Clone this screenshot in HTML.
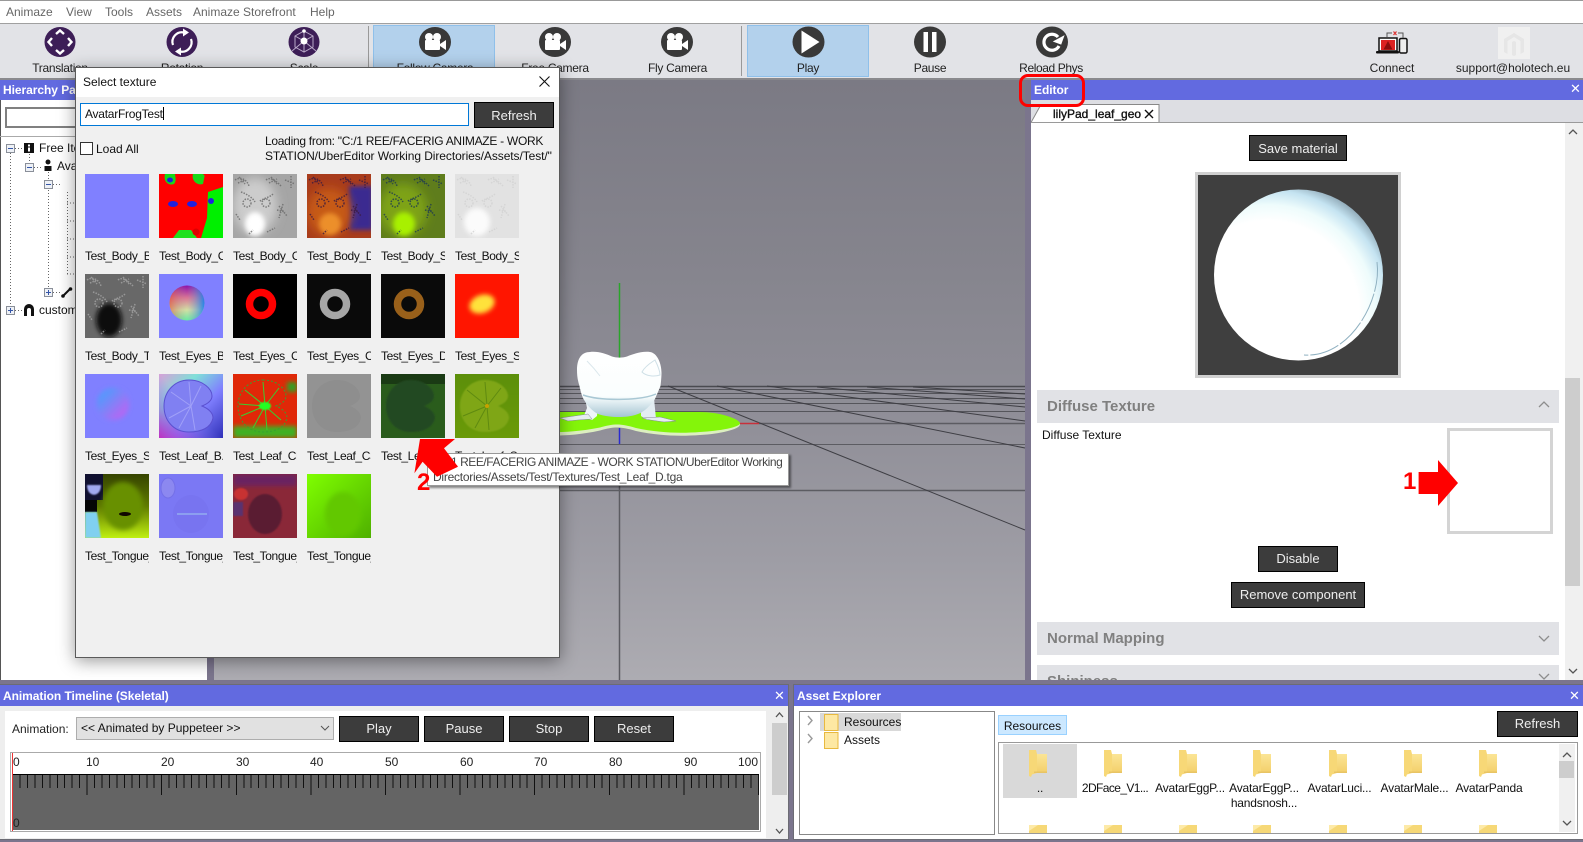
<!DOCTYPE html>
<html><head><meta charset="utf-8"><title>Animaze Editor</title>
<style>
html,body{margin:0;padding:0}
body{position:relative;width:1583px;height:842px;overflow:hidden;background:#7b758d;font:12px/14px "Liberation Sans",sans-serif;color:#000}
div,svg{position:absolute}
.t{position:absolute;white-space:nowrap;font:12px/14px "Liberation Sans",sans-serif}
.m{color:#666;top:5px}
.c{transform:translateX(-50%);top:61px;color:#222;letter-spacing:-.3px}
.bar{background:#626ae0;height:20px}
.bt{position:absolute;color:#fff;font:bold 12px/14px "Liberation Sans",sans-serif;white-space:nowrap;letter-spacing:-.05px}
.btn{position:absolute;box-sizing:border-box;background:#3c3c3c;border:1px solid #000;color:#eee;font:13px/24px "Liberation Sans",sans-serif;text-align:center;white-space:nowrap}
.hd{position:absolute;left:1037px;width:522px;background:#e1e2e6;color:#808080;font:bold 15px/34px "Liberation Sans",sans-serif;text-indent:10px}
.lb{position:absolute;width:64px;overflow:hidden;white-space:nowrap;font:12px/14px "Liberation Sans",sans-serif;color:#111;letter-spacing:-.4px}
.f{position:absolute;white-space:nowrap;text-align:center;transform:translateX(-50%);font:12px/15px "Liberation Sans",sans-serif;color:#111;letter-spacing:-.2px}
.tk{position:absolute;top:755px;font:12px/14px "Liberation Sans",sans-serif;color:#222}
</style></head><body>

<!-- menu -->
<div style="left:0;top:0;width:1583px;height:23px;background:#fff;border-top:1px solid #999;box-sizing:border-box"></div>
<div style="left:0;top:23px;width:1583px;height:1px;background:#a0a0a0"></div>
<span class="t m" style="left:6px">Animaze</span>
<span class="t m" style="left:66px">View</span>
<span class="t m" style="left:105px">Tools</span>
<span class="t m" style="left:146px">Assets</span>
<span class="t m" style="left:193px">Animaze Storefront</span>
<span class="t m" style="left:310px">Help</span>

<!-- toolbar -->
<div style="left:0;top:24px;width:1583px;height:55px;background:#e2e3e7"></div>
<div style="left:0;top:78px;width:1583px;height:2px;background:#8a8a8e"></div>
<div style="left:373px;top:25px;width:122px;height:52px;background:#b3d1ec;border:1px solid #8fc0ea;box-sizing:border-box"></div>
<div style="left:747px;top:25px;width:122px;height:52px;background:#b3d1ec;border:1px solid #8fc0ea;box-sizing:border-box"></div>
<div style="left:368px;top:26px;width:1px;height:50px;background:#999"></div>
<div style="left:741px;top:26px;width:1px;height:50px;background:#999"></div>

<svg style="left:0;top:0" width="1583" height="80" viewBox="0 0 1583 80">
 <defs>
  <g id="cam"><ellipse rx="16" ry="15" fill="#393939"/><circle cx="-6" cy="-5" r="4" fill="#fff"/><circle cx="2" cy="-5" r="4" fill="#fff"/><rect x="-10" y="-2" width="15" height="10" rx="1" fill="#fff"/><path d="M5 2L11-2V8L5 4Z" fill="#fff"/></g>
 </defs>
 <g transform="translate(60,42)"><ellipse rx="15.500" ry="15" fill="#3d1e57"/>
  <path d="M-4-8L0-11.500 4-8M-4 8L0 11.500 4 8M-8-4L-11.500 0-8 4M8-4L11.500 0 8 4" fill="none" stroke="#fff" stroke-width="2.400"/></g>
 <g transform="translate(182,42)"><ellipse rx="15.500" ry="15" fill="#3d1e57"/>
  <path d="M-9 3A9.500 9.500 0 0 1 2-9.500" fill="none" stroke="#fff" stroke-width="2.200"/><path d="M1-13.500L7-9.500 1-5.500Z" fill="#fff"/>
  <path d="M9-3A9.500 9.500 0 0 1-2 9.500" fill="none" stroke="#fff" stroke-width="2.200"/><path d="M-1 13.500L-7 9.500-1 5.500Z" fill="#fff"/></g>
 <g transform="translate(304,42)"><ellipse rx="15.500" ry="15" fill="#3d1e57"/>
  <path d="M0-11L9-6V5L0 10-9 5V-6ZM0-11V10M-9-6L0-1 9-6M-12 9L0-1 12 9" fill="none" stroke="#b9a9c8" stroke-width="1"/><circle r="3.500" cy="-1" fill="#fff"/><circle cy="-11" r="1.800" fill="#fff"/></g>
 <use href="#cam" x="435" y="42"/><use href="#cam" x="555" y="42"/><use href="#cam" x="677" y="42"/>
 <g transform="translate(808.500,42)"><ellipse rx="16" ry="15.500" fill="#393939"/><path d="M-7-11.500L11 0-7 11.500Z" fill="#fff"/></g>
 <g transform="translate(930,42)"><ellipse rx="16" ry="15.500" fill="#393939"/><rect x="-6.500" y="-10" width="4.500" height="20" fill="#fff"/><rect x="2" y="-10" width="4.500" height="20" fill="#fff"/></g>
 <g transform="translate(1052,42)"><ellipse rx="16" ry="15.500" fill="#393939"/><path d="M7 4A8 8 0 1 1 6-5" fill="none" stroke="#fff" stroke-width="3.200"/><path d="M10-8V2H1Z" fill="#fff" transform="rotate(20 8 0)"/></g>
 <g>
  <rect x="1379" y="38" width="18" height="13" fill="#fff" stroke="#111" stroke-width="1.500"/><rect x="1381" y="40" width="14" height="10" fill="#d22"/>
  <path d="M1388 41L1392.500 49.500H1383.500Z" fill="#8c0d0d"/>
  <rect x="1376" y="51" width="23" height="2.500" rx="1" fill="#111"/>
  <rect x="1399.500" y="38.500" width="7.500" height="14.500" rx="1.500" fill="#eee" stroke="#111" stroke-width="1.500"/>
  <path d="M1387 37V33H1392M1398 33H1403V38" fill="none" stroke="#555"/><path d="M1393.500 31.500L1396.500 35M1396.500 31.500L1393.500 35" stroke="#d33" stroke-width="1.200"/>
 </g>
 <rect x="1498" y="27" width="32" height="32" fill="#f0f0f0"/>
 <path d="M1514 33L1524 39V52L1520.500 54V41L1514 37 1507.500 41V54L1504 52V39ZM1512 42L1514 41 1516 42V55L1514 56 1512 55Z" fill="#e6e6e6"/>
</svg>
<span class="t c" style="left:60px">Translation</span>
<span class="t c" style="left:182px">Rotation</span>
<span class="t c" style="left:304px">Scale</span>
<span class="t c" style="left:435px">Follow Camera</span>
<span class="t c" style="left:555px">Free Camera</span>
<span class="t c" style="left:677.500px">Fly Camera</span>
<span class="t c" style="left:808px">Play</span>
<span class="t c" style="left:930px">Pause</span>
<span class="t c" style="left:1051px;letter-spacing:-.4px">Reload Phys</span>
<span class="t c" style="left:1392px;letter-spacing:0">Connect</span>
<span class="t c" style="left:1513px;letter-spacing:0">support@holotech.eu</span>

<!-- hierarchy panel -->
<div style="left:0;top:80px;width:207px;height:600px;background:#fff;border-left:1px solid #555;box-sizing:border-box"></div>
<div class="bar" style="left:0;top:80px;width:207px"></div>
<span class="bt" style="left:3px;top:83px">Hierarchy Panel</span>
<div style="left:5px;top:107px;width:195px;height:21px;border:2px solid #808080;box-sizing:border-box"></div>
<div style="left:0;top:136px;width:207px;height:1px;background:#aaa"></div>
<svg style="left:0;top:137px" width="90" height="190" viewBox="0 137 90 190">
 <g fill="none" stroke="#666" stroke-dasharray="1 2">
  <path d="M10.500 153V305M15 148.500H24M29.500 154V162M34 167.500H43M48.500 172V180M53 184.500H61M48.500 190V287M67.500 192V274M67 203H75M67 221H75M67 239H75M67 257H75M67 274H75M53 292.500H61M15 310.500H24"/>
 </g>
 <g fill="#eef1f6" stroke="#8a8f99"><rect x="6.500" y="144.500" width="8" height="8"/><rect x="25.500" y="163.500" width="8" height="8"/><rect x="44.500" y="180.500" width="8" height="8"/><rect x="44.500" y="288.500" width="8" height="8"/><rect x="6.500" y="306.500" width="8" height="8"/></g>
 <path d="M8 148.500H13M27 167.500H32M46 184.500H51M46 292.500H51M48.500 290V295M8 310.500H13M10.500 308V313" stroke="#3556a8" fill="none"/>
 <rect x="24" y="143" width="10" height="10" fill="#111"/><rect x="28" y="144.500" width="2" height="2" fill="#fff"/><rect x="28" y="147.500" width="2" height="4" fill="#fff"/>
 <circle cx="48" cy="162" r="2.500" fill="#111"/><path d="M44.500 171V166H51.500V171Z" fill="#111"/>
 <path d="M63 296L70 289" stroke="#111" stroke-width="2"/><circle cx="70.500" cy="289" r="1.800" fill="#111"/><circle cx="63" cy="296" r="1.800" fill="#111"/>
 <path d="M24 316V309A5 5 0 0 1 34 309V316H31V310A2 2 0 0 0 27 310V316Z" fill="#111"/>
</svg>
<span class="t" style="left:39px;top:141px;color:#111">Free Items</span>
<span class="t" style="left:57px;top:159px;color:#111">Avatar</span>
<span class="t" style="left:39px;top:303px;color:#111">customs</span>

<!-- viewport -->
<div style="left:214px;top:80px;width:811px;height:600px;background:linear-gradient(180deg,#7b7a84 0,#85848d 30%,#8f8e97 55%,#9e9da5 80%,#adacb2 100%)"></div>
<svg style="left:0;top:0" width="1583" height="842" viewBox="0 0 1583 842">
 <defs>
  <linearGradient id="frog" x1="0" y1="0" x2="0" y2="1"><stop offset="0" stop-color="#fff"/><stop offset=".68" stop-color="#fafefe"/><stop offset="1" stop-color="#a5c5d3"/></linearGradient>
 </defs>
 <g stroke="#4a4a50" stroke-width="1" fill="none">
  <path d="M214 386.500H1025" stroke-width="1.500"/><path d="M214 389.500H1025M214 393.500H1025M214 398.500H1025M214 403.500H1025" stroke="#55555b"/>
  <path d="M214 411.500H1025" stroke="#55555b"/><path d="M759 423.500H1025" stroke="#5c5c62" stroke-width="1.500"/>
  <path d="M214 444.500H1025" stroke="#5c5c62"/><path d="M214 490.500H1025" stroke="#5c5c62" stroke-width="1.500"/>
  <path d="M668 386L1025 530M717 386L1025 448M767 386L1025 421M817 387L1025 407M867 387L1025 399M913 387L1025 394" stroke="#3e3e44"/>
  <path d="M619.500 486V680" stroke="#5c5c62" stroke-width="1.500"/>
 </g>
 <path d="M619.500 283V360" stroke="#2aa52a" stroke-width="1.500"/>
 <path d="M739 423.500H759" stroke="#c8303a" stroke-width="1.500"/>
 <path d="M619.500 428V444" stroke="#2a2ad0" stroke-width="1.500"/>
 <path d="M540 415H700C718 415 738 419 740 424 741 429 720 434 700 435 680 436.500 660 436 636 431 620 426.500 615 426.500 600 430.500 575 436 555 436 540 435Z" fill="#dcefc0"/>
 <path d="M540 412H700C718 412 738 418 740 423 741 427 720 431 700 432 680 433.500 660 433 636 428 620 423.500 615 423.500 600 427.500 575 432.500 555 432.500 540 432Z" fill="#84f50a"/>
 <path d="M585 398L598 400 597 416 592 420 583 418 587 408Z" fill="#eef5f8"/>
 <path d="M641 400L654 398 656 419 647 420 641 416Z" fill="#e3edf2"/>
 <path d="M560 418L588 414 592 419 578 420 568 421ZM642 418L660 417 676 421 664 422 650 420Z" fill="#e5eeef" stroke="#889" stroke-width=".5"/>
 <path d="M577 370C577 358 582 352 590 352 598 351 606 354 612 356.500 617 358 622 358 627 356.500 633 354 642 351 650 352 657 353 661.500 363 661.500 373 661.500 378 660.500 386 660.500 386 658 392 655 399 655 399 650 406 644 412 638 414 628 418 610 418 598 414 592 411 587 405 583.500 399 581 394 579.500 386 579.500 386 577.500 380 577 375 577 370Z" fill="url(#frog)"/>
 <path d="M583 395C600 401 640 401 656 394" fill="none" stroke="#a9c8d4" stroke-width="1.500"/>
 <path d="M642 372C645 366 652 362 655 360 658 366 660 372 660 375 654 377 646 376 642 372Z" fill="none" stroke="#cfe0e7"/>
 <path d="M587 361C592 366 597 372 600 376" fill="none" stroke="#dbe7ec"/>
</svg>

<!-- editor panel -->
<div class="bar" style="left:1031px;top:80px;width:552px"></div>
<span class="bt" style="left:1034px;top:83px">Editor</span>
<span class="t" style="left:1570px;top:82px;color:#fff;font-size:13px">✕</span>
<div style="left:1031px;top:100px;width:552px;height:22px;background:#dddee3"></div>
<svg style="left:1031px;top:104px" width="130" height="19" viewBox="0 0 130 19"><path d="M0 18.500L10 .5H128V18.500Z" fill="#fff" stroke="#888"/></svg>
<span class="t" style="left:1053px;top:107px;color:#111;-webkit-text-stroke:.35px #111">lilyPad_leaf_geo</span>
<svg style="left:1143px;top:108px" width="12" height="12"><path d="M2 2L10 10M10 2L2 10" stroke="#111" stroke-width="1.400"/></svg>
<div style="left:1031px;top:122px;width:552px;height:1px;background:#9a9a9a"></div>
<div style="left:1031px;top:123px;width:534px;height:557px;background:#fff"></div>
<div style="left:1565px;top:123px;width:18px;height:557px;background:#f0f0f0"></div>
<div style="left:1565px;top:378px;width:15px;height:208px;background:#cdcdcd"></div>
<div class="btn" style="left:1249px;top:135px;width:98px;height:26px;line-height:25px">Save material</div>
<div style="left:1195px;top:172px;width:206px;height:206px;background:#3f3f3f;border:3px solid #d0d0d0;box-sizing:border-box"></div>
<svg style="left:1195px;top:172px" width="206" height="206" viewBox="1195 172 206 206">
 <defs><radialGradient id="sph" gradientUnits="userSpaceOnUse" cx="1268" cy="312" r="134"><stop offset=".68" stop-color="#fff"/><stop offset=".8" stop-color="#eefcfc"/><stop offset=".91" stop-color="#c4e3f1"/><stop offset="1" stop-color="#8fa8b6"/></radialGradient></defs>
 <ellipse cx="1298.500" cy="275" rx="84.500" ry="85.500" fill="url(#sph)"/>
 <path d="M1377 262C1382 300 1350 358 1304 355" fill="none" stroke="#8fb0c0" stroke-dasharray="30 2"/>
</svg>
<div class="hd" style="top:390px;height:33px">Diffuse Texture</div>
<span class="t" style="left:1042px;top:428px;color:#111">Diffuse Texture</span>
<div style="left:1447px;top:428px;width:106px;height:106px;box-sizing:border-box;border:3px solid #d4d4d4;background:#fff"></div>
<svg style="left:1400px;top:455px" width="62" height="56" viewBox="1400 455 62 56"><path d="M1418.600 472H1438V460L1458 483 1438 506V494H1418.600Z" fill="#f00"/></svg>
<span style="position:absolute;left:1403px;top:468px;font:bold 24px/28px 'Liberation Sans',sans-serif;color:#f00">1</span>
<div class="btn" style="left:1258px;top:546px;width:80px;height:26px">Disable</div>
<div class="btn" style="left:1231px;top:582px;width:134px;height:26px">Remove component</div>
<div class="hd" style="top:622px;height:33px">Normal Mapping</div>
<div style="left:1037px;top:665px;width:522px;height:15px;overflow:hidden;background:#e1e2e6;color:#808080;font:bold 15px/34px 'Liberation Sans',sans-serif;text-indent:10px">Shininess</div>
<svg style="left:1530px;top:125px" width="53" height="560" viewBox="1530 125 53 560">
 <g fill="none" stroke="#555" stroke-width="1.300"><path d="M1569 134L1573 130 1577 134M1569 669L1573 673 1577 669"/></g>
 <g fill="none" stroke="#8d8d8d" stroke-width="1.300"><path d="M1539 407L1544 402 1549 407M1539 636L1544 641 1549 636M1539 674L1544 679 1549 674"/></g>
</svg>
<div style="left:1019px;top:74px;width:66px;height:33px;border:3px solid #f00;border-radius:9px;box-sizing:border-box"></div>

<!-- timeline panel -->
<div style="left:0;top:685px;width:788px;height:154px;background:#eeeeee;outline:1px solid #6c6c74"></div>
<div class="bar" style="left:0;top:685px;width:788px;height:21px"></div>
<span class="bt" style="left:3px;top:689px">Animation Timeline (Skeletal)</span>
<span class="t" style="left:774px;top:689px;color:#fff;font-size:13px">✕</span>
<div style="left:5px;top:711px;width:761px;height:127px;background:#fff"></div>
<div style="left:772px;top:723px;width:15px;height:72px;background:#cdcdcd"></div>
<span class="t" style="left:12px;top:722px;color:#222">Animation:</span>
<div style="left:76px;top:717px;width:258px;height:23px;box-sizing:border-box;background:#e1e1e1;border:1px solid #adadad;font:12px/21px 'Liberation Sans',sans-serif;padding-left:4px;color:#111">&lt;&lt; Animated by Puppeteer &gt;&gt;</div>
<div class="btn" style="left:339px;top:716px;width:80px;height:26px">Play</div>
<div class="btn" style="left:424px;top:716px;width:80px;height:26px">Pause</div>
<div class="btn" style="left:509px;top:716px;width:80px;height:26px">Stop</div>
<div class="btn" style="left:594px;top:716px;width:80px;height:26px">Reset</div>
<div style="left:10px;top:752px;width:751px;height:80px;box-sizing:border-box;border:1px solid #aaa;background:#fff"></div>
<div style="left:12px;top:774px;width:747px;height:56px;background:#646464;border-top:1px solid #000;box-sizing:border-box"></div>
<div style="left:12px;top:775px;width:747px;height:13px;background:repeating-linear-gradient(90deg,#111 0,#111 1px,transparent 1px,transparent 7.460px)"></div>
<div style="left:12px;top:775px;width:747px;height:20px;background:repeating-linear-gradient(90deg,#111 0,#111 1px,transparent 1px,transparent 74.600px)"></div>
<div style="left:12px;top:753px;width:1px;height:78px;background:#e33"></div>
<span class="tk" style="left:13px">0</span><span class="tk" style="left:86px">10</span><span class="tk" style="left:161px">20</span><span class="tk" style="left:236px">30</span><span class="tk" style="left:310px">40</span><span class="tk" style="left:385px">50</span><span class="tk" style="left:460px">60</span><span class="tk" style="left:534px">70</span><span class="tk" style="left:609px">80</span><span class="tk" style="left:684px">90</span><span class="tk" style="left:738px">100</span>
<span class="tk" style="left:13px;top:816px">0</span>
<svg style="left:320px;top:710px" width="470" height="130" viewBox="320 710 470 130">
 <path d="M321 726L325 730 329 726" fill="none" stroke="#555"/>
 <path d="M776 717L779.500 713 783 717M776 829L779.500 833 783 829" fill="none" stroke="#555" stroke-width="1.300"/>
</svg>

<!-- asset explorer -->
<div style="left:794px;top:685px;width:789px;height:154px;background:#fff;outline:1px solid #6c6c74"></div>
<div class="bar" style="left:794px;top:685px;width:789px;height:21px"></div>
<span class="bt" style="left:797px;top:689px">Asset Explorer</span>
<span class="t" style="left:1569px;top:689px;color:#fff;font-size:13px">✕</span>
<div style="left:799px;top:711px;width:196px;height:124px;border:1px solid #888;box-sizing:border-box;background:#fff"></div>
<div style="left:820px;top:713px;width:81px;height:18px;background:#d9d9d9"></div>
<span class="t" style="left:844px;top:715px;color:#111">Resources</span>
<span class="t" style="left:844px;top:733px;color:#111">Assets</span>
<div style="left:998px;top:715px;width:69px;height:20px;box-sizing:border-box;background:#cce8ff;border:1px solid #99d1ff;font:12px/20px 'Liberation Sans',sans-serif;text-align:center;color:#111">Resources</div>
<div class="btn" style="left:1497px;top:711px;width:81px;height:26px">Refresh</div>
<div style="left:998px;top:742px;width:580px;height:92px;box-sizing:border-box;border:1px solid #999;background:#fff"></div>
<div style="left:1003px;top:744px;width:74px;height:54px;background:#d9d9d9"></div>
<div style="left:1559px;top:744px;width:16px;height:88px;background:#f0f0f0"></div>
<div style="left:1559px;top:761px;width:15px;height:17px;background:#cdcdcd"></div>
<svg style="left:790px;top:705px" width="793" height="130" viewBox="790 705 793 130">
 <defs>
  <linearGradient id="fy" x1="0" y1="0" x2="0" y2="1"><stop offset="0" stop-color="#fbe596"/><stop offset="1" stop-color="#f3cf6a"/></linearGradient>
  <g id="fo"><path d="M5 4H18V23H5Z" fill="url(#fy)"/><path d="M0 0H7L8 4V23L3 24.500 2 27 0 26Z" fill="#f7d877"/><path d="M5 21.500H18V23H5Z" fill="#e8c464"/></g>
  <g id="ft"><path d="M0 0H18V8H0Z" fill="#f6d877"/><path d="M0 0H9L0 6Z" fill="#fdeaa8"/></g>
 </defs>
 <path d="M808 716L812 720.500 808 725M808 734L812 738.500 808 743" fill="none" stroke="#9a9a9a" stroke-width="1.400"/>
 <g fill="#fde8a3" stroke="#e8b93f"><path d="M824.500 714.500H838V730.500H824.500Z"/><path d="M824.500 732.500H838V748.500H824.500Z"/></g>
 <use href="#fo" x="1029" y="750"/><use href="#fo" x="1104" y="750"/><use href="#fo" x="1179" y="750"/><use href="#fo" x="1253" y="750"/><use href="#fo" x="1329" y="750"/><use href="#fo" x="1404" y="750"/><use href="#fo" x="1479" y="750"/>
 <use href="#ft" x="1029" y="825"/><use href="#ft" x="1104" y="825"/><use href="#ft" x="1179" y="825"/><use href="#ft" x="1253" y="825"/><use href="#ft" x="1329" y="825"/><use href="#ft" x="1404" y="825"/><use href="#ft" x="1479" y="825"/>
 <path d="M1563 757L1567 753 1571 757M1563 821L1567 825 1571 821" fill="none" stroke="#555" stroke-width="1.300"/>
</svg>
<span class="f" style="left:1040px;top:781px">..</span>
<span class="f" style="left:1115px;top:781px;letter-spacing:-.6px">2DFace_V1...</span>
<span class="f" style="left:1190px;top:781px">AvatarEggP...</span>
<span class="f" style="left:1264px;top:781px">AvatarEggP...<br>handsnosh...</span>
<span class="f" style="left:1339.500px;top:781px">AvatarLuci...</span>
<span class="f" style="left:1414.500px;top:781px">AvatarMale...</span>
<span class="f" style="left:1489px;top:781px">AvatarPanda</span>

<!-- dialog -->
<div style="left:75px;top:67px;width:485px;height:591px;box-sizing:border-box;background:#f0f0f0;border:1px solid #5a5a5a;box-shadow:0 3px 16px rgba(0,0,0,.4)"></div>
<div style="left:76px;top:68px;width:483px;height:29px;background:#fff"></div>
<span class="t" style="left:83px;top:75px;color:#111">Select texture</span>
<svg style="left:538px;top:75px" width="13" height="13"><path d="M1.500 1.500L11.500 11.500M11.500 1.500L1.500 11.500" stroke="#111" stroke-width="1.100"/></svg>
<div style="left:80px;top:103px;width:389px;height:23px;box-sizing:border-box;background:#fff;border:1px solid #0078d7;font:12px/21px 'Liberation Sans',sans-serif;padding-left:4px;color:#111;letter-spacing:-.25px">AvatarFrogTest<span style="display:inline-block;width:1px;height:13px;background:#000;vertical-align:-2px"></span></div>
<div class="btn" style="left:474px;top:102px;width:80px;height:26px;line-height:25px">Refresh</div>
<div style="left:80px;top:142px;width:13px;height:13px;box-sizing:border-box;background:#fff;border:1px solid #333"></div>
<span class="t" style="left:96px;top:142px;color:#111">Load All</span>
<span class="t" style="left:265px;top:134px;color:#111;letter-spacing:-.28px">Loading from: "C:/1 REE/FACERIG ANIMAZE - WORK</span>
<span class="t" style="left:265px;top:149px;color:#111;letter-spacing:-.08px">STATION/UberEditor Working Directories/Assets/Test/"</span>

<svg style="left:85px;top:174px" width="434" height="364" viewBox="0 0 434 364">
 <defs>
  <filter id="b1" x="-30%" y="-30%" width="160%" height="160%"><feGaussianBlur stdDeviation=".8"/></filter>
  <filter id="b2" x="-50%" y="-50%" width="200%" height="200%"><feGaussianBlur stdDeviation="2.500"/></filter>
  <filter id="b4" x="-50%" y="-50%" width="200%" height="200%"><feGaussianBlur stdDeviation="5"/></filter>
  <clipPath id="cp"><rect width="64" height="64"/></clipPath>
  <g id="dots" fill="none" stroke-width="1.500" stroke-dasharray="1.500 1.200" opacity=".8">
   <path d="M2 6C8 2 14 6 16 12M6 3L12 10M5 9L12 6M33 6C38 2 44 8 48 12M38 3L44 10M36 9L44 5"/>
   <circle cx="14" cy="29" r="4"/><circle cx="33" cy="29" r="4"/>
   <path d="M8 18C14 20 20 24 22 28M40 20C36 24 30 24 26 28M46 32L54 42M50 30L46 44M44 36L52 38M34 58L42 54M16 60L20 56M58 2V14M52 6L62 10M3 40L7 46"/>
  </g>
  <path id="lily" d="M30 6C44 6 53 15 53 22 53 27 48 30 43 32 48 34 54 38 54 44 52 54 42 58 30 58 14 58 5 46 5 32 5 17 16 6 30 6Z"/>
  <linearGradient id="sp2" x1="0" y1="0" x2="0" y2="1"><stop offset="0" stop-color="#8a00a8"/><stop offset=".35" stop-color="#e07090"/><stop offset=".7" stop-color="#d8e8a0"/><stop offset="1" stop-color="#60f0a0"/></linearGradient>
  <linearGradient id="sp2b" x1="0" y1="0" x2="1" y2="0"><stop offset="0" stop-color="#e05030" stop-opacity=".6"/><stop offset=".5" stop-color="#a0a0c0" stop-opacity=".1"/><stop offset="1" stop-color="#1080f0" stop-opacity=".9"/></linearGradient>
  <linearGradient id="sp3" x1="0" y1="0" x2="1" y2="1"><stop offset="0" stop-color="#38a8ff"/><stop offset="1" stop-color="#d058f0"/></linearGradient>
  <linearGradient id="lg" x1="0" y1="0" x2="1" y2="1"><stop offset="0" stop-color="#d8a0d8"/><stop offset=".3" stop-color="#80e0d8"/><stop offset=".6" stop-color="#8080ff"/><stop offset="1" stop-color="#3030b8"/></linearGradient>
  <linearGradient id="lg2" x1="0" y1="1" x2="1" y2="0"><stop offset="0" stop-color="#c030c0"/><stop offset=".5" stop-color="#8080ff" stop-opacity="0"/></linearGradient>
  <linearGradient id="oc" x1="0" y1="0" x2="0" y2="1"><stop offset="0" stop-color="#5c8f0a"/><stop offset="1" stop-color="#6a9a08"/></linearGradient>
  <linearGradient id="tg" x1="0" y1="0" x2="1" y2="1"><stop offset="0" stop-color="#7fff00"/><stop offset="1" stop-color="#4fb000"/></linearGradient>
  <linearGradient id="t1" x1="0" y1="0" x2="0" y2="1"><stop offset="0" stop-color="#364400"/><stop offset=".5" stop-color="#5f7a00"/><stop offset="1" stop-color="#c0f010"/></linearGradient>
 </defs>
 <g clip-path="url(#cp)"><rect width="64" height="64" fill="#8080ff"/></g>
 <g transform="translate(74,0)" clip-path="url(#cp)"><rect width="64" height="64" fill="#ff0000"/>
  <path d="M64 13V64H42L48 44 49 18Z" fill="#00f000"/><path d="M6 0C4 8 10 12 15 10 18 7 16 2 16 0ZM34 0C32 6 38 12 44 10L46 0Z" fill="#18d818"/><path d="M14 64L20 56H32L38 64Z" fill="#20e020"/>
  <g fill="#2020e0"><ellipse cx="11" cy="6" rx="3" ry="2.500"/><ellipse cx="14" cy="30" rx="5" ry="3"/><ellipse cx="33" cy="30" rx="5" ry="3"/><ellipse cx="52" cy="27" rx="3" ry="3"/></g>
  <path d="M44 0H64V13H49V5Z" fill="#ff0000"/><circle cx="37" cy="58" r="3.500" fill="#d00"/>
 </g>
 <g transform="translate(148,0)" clip-path="url(#cp)"><rect width="64" height="64" fill="#a5a5a5"/>
  <ellipse cx="22" cy="32" rx="22" ry="28" fill="#cccccc" filter="url(#b4)"/><ellipse cx="22" cy="50" rx="10" ry="12" fill="#fff" filter="url(#b2)"/>
  <use href="#dots" stroke="#6a6a6a"/></g>
 <g transform="translate(222,0)" clip-path="url(#cp)"><rect width="64" height="64" fill="#a83c1c"/>
  <rect x="42" y="12" width="24" height="44" fill="#3a2c90" filter="url(#b2)"/>
  <ellipse cx="22" cy="38" rx="22" ry="24" fill="#c65a18" filter="url(#b4)"/><ellipse cx="23" cy="50" rx="11" ry="11" fill="#ec8f2a" filter="url(#b2)"/>
  <use href="#dots" stroke="#3a1a40"/></g>
 <g transform="translate(296,0)" clip-path="url(#cp)"><rect width="64" height="64" fill="#5f7d1c"/>
  <ellipse cx="22" cy="36" rx="24" ry="26" fill="#7ea314" filter="url(#b4)"/><ellipse cx="23" cy="50" rx="11" ry="12" fill="#a8f000" filter="url(#b2)"/>
  <use href="#dots" stroke="#1f3a50"/></g>
 <g transform="translate(370,0)" clip-path="url(#cp)"><rect width="64" height="64" fill="#e2e2e2"/>
  <ellipse cx="22" cy="48" rx="13" ry="14" fill="#fbfbfb" filter="url(#b2)"/><use href="#dots" stroke="#d2d2d2"/></g>
 <g transform="translate(0,100)" clip-path="url(#cp)"><rect width="64" height="64" fill="#686868"/>
  <ellipse cx="24" cy="46" rx="13" ry="17" fill="#0c0c0c" filter="url(#b2)"/><use href="#dots" stroke="#a5a5a5"/></g>
 <g transform="translate(74,100)" clip-path="url(#cp)"><rect width="64" height="64" fill="#8080ff"/>
  <circle cx="28" cy="29" r="17.500" fill="url(#sp2)"/><circle cx="28" cy="29" r="17.500" fill="url(#sp2b)"/></g>
 <g transform="translate(148,100)" clip-path="url(#cp)"><rect width="64" height="64" fill="#000"/><circle cx="28" cy="30" r="11.500" fill="none" stroke="#ff0000" stroke-width="7.500"/></g>
 <g transform="translate(222,100)" clip-path="url(#cp)"><rect width="64" height="64" fill="#0a0a0a"/><circle cx="28" cy="30" r="11.500" fill="none" stroke="#a6a6a6" stroke-width="7.500"/></g>
 <g transform="translate(296,100)" clip-path="url(#cp)"><rect width="64" height="64" fill="#0a0a0a"/><circle cx="28" cy="30" r="11.500" fill="none" stroke="#99601a" stroke-width="7.500"/></g>
 <g transform="translate(370,100)" clip-path="url(#cp)"><rect width="64" height="64" fill="#ff1500"/><ellipse cx="27" cy="30" rx="13" ry="9" fill="#ffe23a" filter="url(#b2)" transform="rotate(-20 27 30)"/></g>
 <g transform="translate(0,200)" clip-path="url(#cp)"><rect width="64" height="64" fill="#8080ff"/><circle cx="28" cy="30" r="16" fill="url(#sp3)" filter="url(#b2)"/></g>
 <g transform="translate(74,200)" clip-path="url(#cp)"><rect width="64" height="64" fill="url(#lg)"/><rect width="64" height="64" fill="url(#lg2)"/><use href="#lily" fill="#8080f2" stroke="#5a50d0"/><path d="M32 32L12 18M32 32L10 44M32 32L30 8M32 32L36 56M32 32L20 54M32 32L42 12" stroke="#a0a0f8"/></g>
 <g transform="translate(148,200)" clip-path="url(#cp)"><rect width="64" height="64" fill="#e02808"/>
  <rect y="52" width="64" height="12" fill="#40b020" filter="url(#b2)"/><rect x="54" y="8" width="10" height="10" fill="#30a020" filter="url(#b2)"/>
  <use href="#lily" fill="none" stroke="#38a030" stroke-dasharray="2 2"/>
  <path d="M32 32L12 16M32 32L8 42M32 32L30 8M32 32L34 56M32 32L20 54M32 32L46 14M32 32L48 46M32 32L6 30" stroke="#38d030"/><ellipse cx="32" cy="32" rx="6" ry="4" fill="#20ff20" filter="url(#b1)"/></g>
 <g transform="translate(222,200)" clip-path="url(#cp)"><rect width="64" height="64" fill="#939393"/><use href="#lily" fill="#8e8e8e"/></g>
 <g transform="translate(296,200)" clip-path="url(#cp)"><rect width="64" height="64" fill="#2a5c1c"/><rect width="64" height="10" fill="#1a3a14"/><use href="#lily" fill="#234a22" filter="url(#b1)"/></g>
 <g transform="translate(370,200)" clip-path="url(#cp)"><rect width="64" height="64" fill="url(#oc)"/><use href="#lily" fill="#7fa612" filter="url(#b1)"/><path d="M32 32L12 16M32 32L8 42M32 32L30 8M32 32L34 56M32 32L20 54M32 32L46 14" stroke="#5f8a10"/><circle cx="32" cy="32" r="2" fill="#c8a000"/></g>
 <g transform="translate(0,300)" clip-path="url(#cp)"><rect width="64" height="64" fill="url(#t1)"/>
  <rect width="18" height="26" fill="#101030"/><path d="M2 11C2 24 16 24 16 11" fill="#a0a8f0" filter="url(#b1)"/><rect y="26" width="12" height="12" fill="#050505"/><path d="M0 38H12L16 64H0Z" fill="#80d0f0" filter="url(#b1)"/>
  <ellipse cx="38" cy="32" rx="20" ry="24" fill="#689000" filter="url(#b2)"/><ellipse cx="40" cy="40" rx="6" ry="2" fill="#100800"/></g>
 <g transform="translate(74,300)" clip-path="url(#cp)"><rect width="64" height="64" fill="#7b78f4"/><ellipse cx="9" cy="14" rx="7" ry="10" fill="#8c88f0" stroke="#7470e8"/><ellipse cx="32" cy="40" rx="18" ry="19" fill="#7874f0"/><path d="M18 40H48" stroke="#a0c8f0"/></g>
 <g transform="translate(148,300)" clip-path="url(#cp)"><rect width="64" height="64" fill="#8a2838"/><rect x="0" y="0" width="64" height="12" fill="#6a2060" filter="url(#b2)"/><ellipse cx="8" cy="20" rx="7" ry="6" fill="#c83030" filter="url(#b1)"/><rect y="28" width="10" height="14" fill="#5a3070" filter="url(#b1)"/><ellipse cx="32" cy="40" rx="17" ry="20" fill="#5a1c30" filter="url(#b1)"/></g>
 <g transform="translate(222,300)" clip-path="url(#cp)"><rect width="64" height="64" fill="url(#tg)"/><ellipse cx="36" cy="40" rx="18" ry="22" fill="#62c800" filter="url(#b2)"/></g>
</svg>
<span class="lb" style="left:85px;top:249px">Test_Body_B.tga</span><span class="lb" style="left:159px;top:249px">Test_Body_CM</span><span class="lb" style="left:233px;top:249px">Test_Body_CS</span><span class="lb" style="left:307px;top:249px">Test_Body_D.tga</span><span class="lb" style="left:381px;top:249px">Test_Body_S.tga</span><span class="lb" style="left:455px;top:249px">Test_Body_Sp</span>
<span class="lb" style="left:85px;top:349px">Test_Body_T.tga</span><span class="lb" style="left:159px;top:349px">Test_Eyes_B.tga</span><span class="lb" style="left:233px;top:349px">Test_Eyes_CM</span><span class="lb" style="left:307px;top:349px">Test_Eyes_CS</span><span class="lb" style="left:381px;top:349px">Test_Eyes_D.tga</span><span class="lb" style="left:455px;top:349px">Test_Eyes_S.tga</span>
<span class="lb" style="left:85px;top:449px">Test_Eyes_Sp</span><span class="lb" style="left:159px;top:449px">Test_Leaf_B.tga</span><span class="lb" style="left:233px;top:449px">Test_Leaf_CM</span><span class="lb" style="left:307px;top:449px">Test_Leaf_CS</span><span class="lb" style="left:381px;top:449px">Test_Leaf_D.tga</span><span class="lb" style="left:455px;top:449px">Test_Leaf_S.tga</span>
<span class="lb" style="left:85px;top:549px">Test_Tongue_B</span><span class="lb" style="left:159px;top:549px">Test_Tongue_C</span><span class="lb" style="left:233px;top:549px">Test_Tongue_D</span><span class="lb" style="left:307px;top:549px">Test_Tongue_S</span>

<!-- tooltip -->
<div style="left:427px;top:453px;width:362px;height:33px;box-sizing:border-box;background:#fff;border:1px solid #999;box-shadow:2px 2px 2px rgba(0,0,0,.45)"></div>
<span class="t" style="left:437px;top:455px;color:#444;line-height:15px;letter-spacing:-.45px">C:/1 REE/FACERIG ANIMAZE - WORK STATION/UberEditor Working</span>
<span class="t" style="left:433px;top:470px;color:#444;line-height:15px;letter-spacing:-.25px">Directories/Assets/Test/Textures/Test_Leaf_D.tga</span>
<svg style="left:410px;top:435px" width="52" height="46" viewBox="410 435 52 46"><path d="M420 439H455L444 448.300 458 466.700 437 476.700 422.600 461.700 414.400 473.300Z" fill="#f00"/></svg>
<span style="position:absolute;left:417px;top:470px;font:bold 24px/26px 'Liberation Sans',sans-serif;color:#f00">2</span>
</body></html>
